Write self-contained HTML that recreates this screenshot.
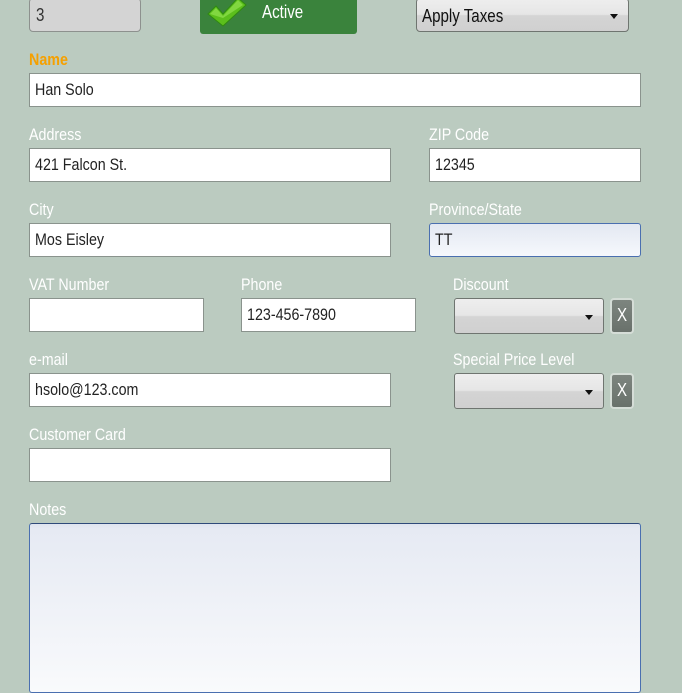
<!DOCTYPE html>
<html><head><style>
body{margin:0;width:682px;height:684px;overflow:hidden;background:#bbcbc0;font-family:"Liberation Sans",sans-serif;position:relative}
.a{position:absolute;box-sizing:border-box}
.c{display:inline-block;transform:scaleX(0.84);transform-origin:0 50%;white-space:nowrap}
.lbl{position:absolute;color:#fff;font-size:17px;line-height:18px}
.in{position:absolute;box-sizing:border-box;background:#fff;border:1px solid #8a938d;font-size:17px;color:#222;padding-left:5px;line-height:32px}
.sel{position:absolute;box-sizing:border-box;border:1px solid #6f7570;border-radius:3px;background:linear-gradient(#eee 0%,#e6e6e6 48%,#d4d4d4 52%,#d0d0d0 100%)}
.arr{position:absolute;right:10px;top:14px;width:0;height:0;border-left:4px solid transparent;border-right:4px solid transparent;border-top:5px solid #111}
.x{position:absolute;box-sizing:border-box;width:24px;height:36px;border:2px solid #d5ddd7;border-radius:4px;background:linear-gradient(#7d857f,#69716b);color:#fff;font-size:18px;text-align:center;line-height:31px}
</style></head><body>
<div class="a" style="left:29px;top:-2px;width:112px;height:34px;background:#d4d4d4;border:1px solid #8d918e;border-radius:4px;font-size:18px;color:#333;padding:6px 0 0 6px"><span class="c">3</span></div>
<div class="a" style="left:200px;top:-3px;width:157px;height:37px;background:#3a833c;border-radius:3px;border-top:2px solid #4d9a4e"></div>
<svg class="a" style="left:207px;top:-4px" width="40" height="34" viewBox="0 0 40 34"><path d="M1 18 L9 10 L16 18 L31 2 L39 9 L16 30 Z" fill="#5cbf1c" stroke="#2f8a10" stroke-width="1"/><path d="M3 18 L9 12 L16 20 L31 4 L36 9 L16 22 Z" fill="#9ae858" opacity=".6"/></svg>
<div class="a" style="left:262px;top:2px;color:#fff;font-size:18px"><span class="c">Active</span></div>
<div class="sel" style="left:416px;top:-2px;width:213px;height:34px;border-radius:4px"><span class="c" style="position:absolute;left:5px;top:7px;font-size:18px;color:#111">Apply Taxes</span><div class="arr" style="top:15px"></div></div>

<div class="lbl" style="left:29px;top:51px;color:#f5a000;font-weight:bold"><span class="c">Name</span></div>
<div class="in" style="left:29px;top:73px;width:612px;height:34px"><span class="c">Han Solo</span></div>

<div class="lbl" style="left:29px;top:126px"><span class="c">Address</span></div>
<div class="in" style="left:29px;top:148px;width:362px;height:34px"><span class="c">421 Falcon St.</span></div>
<div class="lbl" style="left:429px;top:126px"><span class="c">ZIP Code</span></div>
<div class="in" style="left:429px;top:148px;width:212px;height:34px"><span class="c">12345</span></div>

<div class="lbl" style="left:29px;top:201px"><span class="c">City</span></div>
<div class="in" style="left:29px;top:223px;width:362px;height:34px"><span class="c">Mos Eisley</span></div>
<div class="lbl" style="left:429px;top:201px"><span class="c">Province/State</span></div>
<div class="in" style="left:429px;top:223px;width:212px;height:34px;border-color:#4a6fb0;border-radius:3px;background:linear-gradient(#e3e8f2,#f6f8fc)"><span class="c">TT</span></div>

<div class="lbl" style="left:29px;top:276px"><span class="c">VAT Number</span></div>
<div class="in" style="left:29px;top:298px;width:175px;height:34px"></div>
<div class="lbl" style="left:241px;top:276px"><span class="c">Phone</span></div>
<div class="in" style="left:241px;top:298px;width:175px;height:34px"><span class="c">123-456-7890</span></div>
<div class="lbl" style="left:453px;top:276px"><span class="c">Discount</span></div>
<div class="sel" style="left:454px;top:298px;width:150px;height:36px"><div class="arr" style="top:16px"></div></div>
<div class="x" style="left:610px;top:298px"><span class="c" style="transform-origin:50% 50%">X</span></div>

<div class="lbl" style="left:29px;top:351px"><span class="c">e-mail</span></div>
<div class="in" style="left:29px;top:373px;width:362px;height:34px"><span class="c">hsolo@123.com</span></div>
<div class="lbl" style="left:453px;top:351px"><span class="c">Special Price Level</span></div>
<div class="sel" style="left:454px;top:373px;width:150px;height:36px"><div class="arr" style="top:16px"></div></div>
<div class="x" style="left:610px;top:373px"><span class="c" style="transform-origin:50% 50%">X</span></div>

<div class="lbl" style="left:29px;top:426px"><span class="c">Customer Card</span></div>
<div class="in" style="left:29px;top:448px;width:362px;height:34px"></div>

<div class="lbl" style="left:29px;top:501px"><span class="c">Notes</span></div>
<div class="a" style="left:29px;top:523px;width:612px;height:170px;border:1px solid #4a6fb0;border-top-color:#2f4a7a;border-radius:3px;background:linear-gradient(#dfe4ef 0,#e6eaf3 5px,#f9fafc 100%)"></div>
</body></html>
